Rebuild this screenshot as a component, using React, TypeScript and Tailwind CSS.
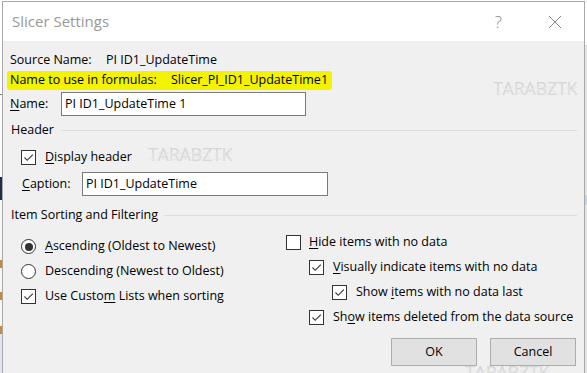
import React from "react";

const font = "font-['Segoe_UI','Open_Sans','Noto_Sans',sans-serif]";

function Check({ checked = false }: { checked?: boolean }) {
  return (
    <span className="w-[15px] h-[15px] border border-[#333333] bg-white flex items-center justify-center shrink-0">
      {checked && (
        <svg width="13" height="13" viewBox="0 0 13 13">
          <polyline points="2.5,6.5 5.2,9.3 10.8,3.6" fill="none" stroke="#333333" strokeWidth="1.1" />
        </svg>
      )}
    </span>
  );
}

function Radio({ checked = false }: { checked?: boolean }) {
  return (
    <span className="w-[15px] h-[15px] rounded-full border border-[#333333] bg-white flex items-center justify-center shrink-0">
      {checked && <span className="w-[8px] h-[8px] rounded-full bg-[#333333]" />}
    </span>
  );
}

function Watermark({ className }: { className: string }) {
  return (
    <div className={`absolute pointer-events-none select-none flex flex-col items-start leading-none ${className}`}>
      <span className="text-[18px] text-[#d6d6d6] tracking-[-0.3px]">TARABZTK</span>
      <span className="text-[18px] text-[#e6e6e6] tracking-[-0.3px] scale-y-[-0.6] origin-top -mt-[1px] opacity-70">TARABZTK</span>
    </div>
  );
}

export default function App() {
  return (
    <div className={`w-[587px] h-[373px] overflow-hidden flex bg-white text-[12.5px] text-black ${font}`}>
      {/* excel edge left */}
      <div className="w-[2px] flex flex-col shrink-0">
        <div className="h-[94px] bg-white" />
        <div className="h-[1px] bg-[#7a7a7a]" />
        <div className="h-[82px] bg-[#fafafa]" />
        <div className="h-[23px] bg-[#1f2d4d]" />
        <div className="h-[60px] bg-[#f7f7f7]" />
        <div className="h-[8px] bg-[#c98a3a]" />
        <div className="h-[24px] bg-[#f7f7f7]" />
        <div className="h-[8px] bg-[#c98a3a]" />
        <div className="h-[26px] bg-[#f7f7f7]" />
        <div className="h-[8px] bg-[#c98a3a]" />
        <div className="flex-1 bg-[#dfe6f0]" />
      </div>

      {/* dialog */}
      <div className="relative flex-1 mt-[1px] border-l border-t border-r border-[#a8a8a8] flex flex-col bg-[#f0f0f0]">
        {/* title bar */}
        <div className="h-[39px] bg-white flex items-center shrink-0">
          <span className="pl-[9px] text-[15px] text-[#999999]">Slicer Settings</span>
          <span className="ml-auto mr-[46px] text-[17px] text-[#8a8a8a] font-light">?</span>
          <svg width="14" height="14" viewBox="0 0 14 14" className="mr-[22px]">
            <path d="M1 1 L13 13 M13 1 L1 13" stroke="#8a8a8a" strokeWidth="1" fill="none" />
          </svg>
        </div>

        {/* body */}
        <div className="flex flex-col pl-[7px] pr-[7px] pt-[9px]">
          <div className="h-[20px] flex items-center">
            <span className="w-[96px]">Source Name:</span>
            <span>PI ID1_UpdateTime</span>
          </div>
          <div className="h-[21px] flex items-center">
            <span className="-ml-[3px] pl-[3px] pr-[4px] h-[19px] flex items-center bg-[#f3f300] rounded-[3px]">
              <span className="w-[161px]">Name to use in formulas:</span>
              <span>Slicer_PI_ID1_UpdateTime1</span>
            </span>
          </div>
          <div className="h-[24px] mt-[1px] flex items-center">
            <span className="w-[51px]">
              <u className="underline-offset-[2px]">N</u>ame:
            </span>
            <div className="w-[245px] h-[24px] bg-white border border-[#7a7a7a] flex items-center pl-[3px]">
              PI ID1_UpdateTime 1
            </div>
          </div>

          <div className="h-[20px] mt-[4px] flex items-center gap-[7px] pl-[1px]">
            <span>Header</span>
            <div className="flex-1 h-px bg-[#dcdcdc]" />
          </div>
          <div className="h-[20px] mt-[7px] flex items-center gap-[9px] pl-[11px]">
            <Check checked />
            <span>
              <u className="underline-offset-[2px]">D</u>isplay header
            </span>
          </div>
          <div className="h-[24px] mt-[5px] flex items-center pl-[12px]">
            <span className="w-[60px]">
              <u className="underline-offset-[2px]">C</u>aption:
            </span>
            <div className="w-[246px] h-[24px] bg-white border border-[#7a7a7a] flex items-center pl-[3px]">
              PI ID1_UpdateTime
            </div>
          </div>

          <div className="h-[20px] mt-[9px] flex items-center gap-[6px] pl-[1px]">
            <span>Item Sorting and Filtering</span>
            <div className="flex-1 h-px bg-[#dcdcdc]" />
          </div>

          <div className="flex">
            <div className="w-[276px] pl-[11px] pt-[9px] flex flex-col">
              <div className="h-[25px] flex items-center gap-[9px]">
                <Radio checked />
                <span>
                  <u className="underline-offset-[2px]">A</u>scending (Oldest to Newest)
                </span>
              </div>
              <div className="h-[25px] flex items-center gap-[9px]">
                <Radio />
                <span>
                  Descendin<u className="underline-offset-[2px]">g</u> (Newest to Oldest)
                </span>
              </div>
              <div className="h-[25px] flex items-center gap-[9px]">
                <Check checked />
                <span>
                  Use Custo<u className="underline-offset-[2px]">m</u> Lists when sorting
                </span>
              </div>
            </div>
            <div className="flex-1 pt-[5px] flex flex-col">
              <div className="h-[25px] flex items-center gap-[8px]">
                <Check />
                <span>
                  <u className="underline-offset-[2px]">H</u>ide items with no data
                </span>
              </div>
              <div className="h-[25px] flex items-center gap-[9px] pl-[23px]">
                <Check checked />
                <span>
                  <u className="underline-offset-[2px]">V</u>isually indicate items with no data
                </span>
              </div>
              <div className="h-[25px] flex items-center gap-[9px] pl-[23px] pl-[46px]">
                <Check checked />
                <span>
                  Show <u className="underline-offset-[2px]">i</u>tems with no data last
                </span>
              </div>
              <div className="h-[25px] flex items-center gap-[9px] pl-[23px]">
                <Check checked />
                <span>
                  Sh<u className="underline-offset-[2px]">o</u>w items deleted from the data source
                </span>
              </div>
              <div className="mt-[8px] flex justify-end gap-[13px] pr-[1px]">
                <button className="w-[86px] h-[28px] bg-[#e1e1e1] border border-[#adadad] text-[12.5px]">OK</button>
                <button className="w-[86px] h-[28px] bg-[#e1e1e1] border border-[#adadad] text-[12.5px]">Cancel</button>
              </div>
            </div>
          </div>
        </div>

        <Watermark className="left-[490px] top-[77px]" />
        <Watermark className="left-[145px] top-[143px]" />
        <Watermark className="left-[462px] top-[361px]" />
      </div>

      {/* excel edge right */}
      <div className="w-[2px] flex flex-col shrink-0">
        <div className="h-[45px] bg-white" />
        <div className="h-[150px] bg-[#e4e4e4]" />
        <div className="h-[10px] bg-[#c8d4e6]" />
        <div className="flex-1 bg-[#e4e4e4]" />
      </div>
    </div>
  );
}
